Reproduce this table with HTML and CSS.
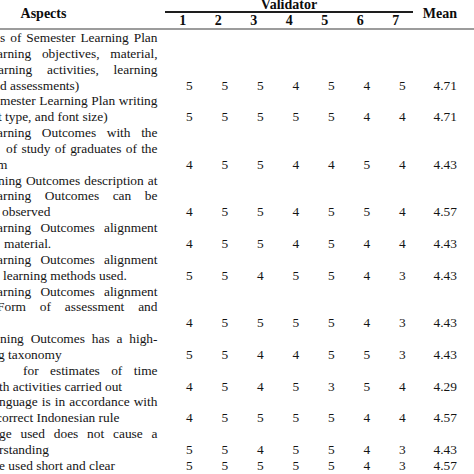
FILE: index.html
```html
<!DOCTYPE html>
<html lang="en">
<head>
<meta charset="utf-8">
<title>Validation results</title>
<link rel="stylesheet" href="styles.css">
</head>
<body>
<div class="table">
  <div class="h-aspects">Aspects</div>
  <div class="h-validator">Validator</div>
  <div class="h-mean">Mean</div>
  <div class="h-num">1</div>
  <div class="h-num">2</div>
  <div class="h-num">3</div>
  <div class="h-num">4</div>
  <div class="h-num">5</div>
  <div class="h-num">6</div>
  <div class="h-num">7</div>
  <div class="rule"></div>

  <div class="aspect">
    <div class="j">s of Semester Learning Plan</div>
    <div class="j in-m3">arning objectives, material,</div>
    <div class="j in-m2">arning activities, learning</div>
    <div>d assessments)</div>
  </div>
  <div class="n">5</div><div class="n">5</div><div class="n">5</div><div class="n">4</div><div class="n">5</div><div class="n">4</div><div class="n">5</div><div class="m">4.71</div>

  <div class="aspect">
    <div class="j">mester Learning Plan writing</div>
    <div class="in-m2">t type, and font size)</div>
  </div>
  <div class="n">5</div><div class="n">5</div><div class="n">5</div><div class="n">5</div><div class="n">5</div><div class="n">4</div><div class="n">4</div><div class="m">4.71</div>

  <div class="aspect">
    <div class="j in-m3">arning Outcomes with the</div>
    <div class="j in-6">of study of graduates of the</div>
    <div class="in-m3">m</div>
  </div>
  <div class="n">4</div><div class="n">5</div><div class="n">5</div><div class="n">4</div><div class="n">4</div><div class="n">5</div><div class="n">4</div><div class="m">4.43</div>

  <div class="aspect">
    <div class="j in-m2">ning Outcomes description at</div>
    <div class="j in-m3">arning Outcomes can be</div>
    <div class="in-2">observed</div>
  </div>
  <div class="n">4</div><div class="n">5</div><div class="n">5</div><div class="n">4</div><div class="n">5</div><div class="n">5</div><div class="n">4</div><div class="m">4.57</div>

  <div class="aspect">
    <div class="j in-m3">arning Outcomes alignment</div>
    <div class="in-4">material.</div>
  </div>
  <div class="n">4</div><div class="n">5</div><div class="n">5</div><div class="n">4</div><div class="n">5</div><div class="n">4</div><div class="n">4</div><div class="m">4.43</div>

  <div class="aspect">
    <div class="j in-m3">arning Outcomes alignment</div>
    <div class="in-3">learning methods used.</div>
  </div>
  <div class="n">5</div><div class="n">5</div><div class="n">4</div><div class="n">5</div><div class="n">5</div><div class="n">4</div><div class="n">3</div><div class="m">4.43</div>

  <div class="aspect">
    <div class="j in-m3">arning Outcomes alignment</div>
    <div class="j in-m3">Form of assessment and</div>
    <div>&nbsp;</div>
  </div>
  <div class="n">4</div><div class="n">5</div><div class="n">5</div><div class="n">5</div><div class="n">5</div><div class="n">4</div><div class="n">3</div><div class="m">4.43</div>

  <div class="aspect">
    <div class="j">ning Outcomes has a high-</div>
    <div class="in-m2">g taxonomy</div>
  </div>
  <div class="n">5</div><div class="n">5</div><div class="n">4</div><div class="n">4</div><div class="n">5</div><div class="n">5</div><div class="n">3</div><div class="m">4.43</div>

  <div class="aspect">
    <div class="j in-23">for estimates of time</div>
    <div class="in-m1">th activities carried out</div>
  </div>
  <div class="n">4</div><div class="n">5</div><div class="n">4</div><div class="n">5</div><div class="n">3</div><div class="n">5</div><div class="n">4</div><div class="m">4.29</div>

  <div class="aspect">
    <div class="j in-m1">nguage is in accordance with</div>
    <div class="in-m4">correct Indonesian rule</div>
  </div>
  <div class="n">4</div><div class="n">5</div><div class="n">5</div><div class="n">5</div><div class="n">5</div><div class="n">4</div><div class="n">4</div><div class="m">4.57</div>

  <div class="aspect">
    <div class="j in-m1">ge used does not cause a</div>
    <div class="in-m1">rstanding</div>
  </div>
  <div class="n">5</div><div class="n">5</div><div class="n">4</div><div class="n">5</div><div class="n">5</div><div class="n">4</div><div class="n">3</div><div class="m">4.43</div>

  <div class="aspect">
    <div class="in-m1">e used short and clear</div>
  </div>
  <div class="n">5</div><div class="n">5</div><div class="n">5</div><div class="n">5</div><div class="n">5</div><div class="n">4</div><div class="n">3</div><div class="m">4.57</div>
</div>
</body>
</html>
```
FILE: styles.css
```css
html, body {
  margin: 0;
  padding: 0;
  background: #ffffff;
}

body {
  width: 474px;
  height: 474px;
  overflow: hidden;
  font-family: "Liberation Serif", "Times New Roman", serif;
  color: #141414;
}

.table {
  display: grid;
  grid-template-columns: 171.5px repeat(7, 35.5px) 1fr;
  font-size: 13.4px;
  line-height: 15.85px;
}

.h-aspects,
.h-validator,
.h-mean,
.h-num {
  font-weight: bold;
  font-size: 14px;
  color: #0c0c0c;
}

.h-aspects {
  grid-column: 1;
  grid-row: 1 / span 2;
  align-self: center;
  text-align: center;
  padding-right: 84.5px;
  padding-bottom: 1px;
}

.h-validator {
  grid-column: 2 / span 7;
  grid-row: 1;
  line-height: 13px;
  margin: -2px 7px 0 -6.5px;
  text-align: center;
  border-bottom: 2px solid #1e1e1e;
}

.h-mean {
  grid-column: 9;
  grid-row: 1 / span 2;
  align-self: center;
  text-align: right;
  padding-right: 17px;
  padding-bottom: 1px;
}

.h-num {
  grid-row: 2;
  line-height: 15px;
  text-align: center;
  padding-right: 13px;
}

.rule {
  grid-column: 1 / -1;
  grid-row: 3;
  height: 2px;
  background: #9c9c9c;
}

.aspect {
  grid-column: 1;
  padding-right: 14px;
}

.j {
  text-align: justify;
  text-align-last: justify;
}

.in-m4 { text-indent: -4px; }
.in-m3 { text-indent: -3px; }
.in-m2 { text-indent: -2px; }
.in-m1 { text-indent: -1px; }
.in-2 { text-indent: 2px; }
.in-3 { text-indent: 3px; }
.in-4 { text-indent: 4px; }
.in-6 { text-indent: 6px; }
.in-23 { text-indent: 23px; }

.n {
  align-self: end;
  text-align: center;
}

.m {
  align-self: end;
  text-align: right;
  padding-right: 17px;
}
```
